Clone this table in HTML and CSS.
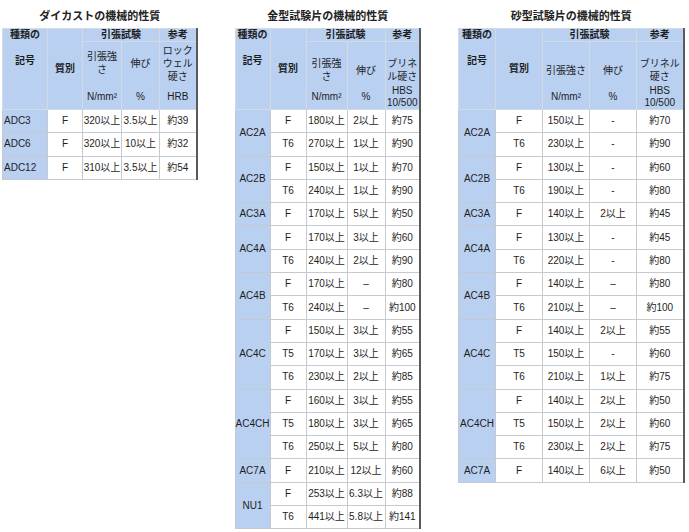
FILE: index.html
```html
<!DOCTYPE html>
<html lang="ja">
<head>
<meta charset="utf-8">
<title>機械的性質</title>
<link rel="stylesheet" href="styles.css">
</head>
<body>
<div class="page">

  <section class="block b1">
    <h2 class="ttl">ダイカストの機械的性質</h2>
    <table class="tb t1">
      <colgroup><col class="c1"><col class="c2"><col class="c3"><col class="c4"><col class="c5"></colgroup>
      <thead>
        <tr class="h1">
          <th rowspan="2" class="kind"><div class="k1">種類の</div><div class="k2">記号</div></th>
          <th rowspan="2" class="bold">質別</th>
          <th colspan="2" class="bold">引張試験</th>
          <th class="bold">参考</th>
        </tr>
        <tr class="h2">
          <th><div class="stack"><div class="top">引張強さ</div><div class="bot">N/mm²</div></div></th>
          <th><div class="stack"><div class="top">伸び</div><div class="bot">%</div></div></th>
          <th><div class="stack"><div class="top">ロックウェル硬さ</div><div class="bot">HRB</div></div></th>
        </tr>
      </thead>
      <tbody>
        <tr class="d"><td class="lab left">ADC3</td><td>F</td><td>320以上</td><td>3.5以上</td><td>約39</td></tr>
        <tr class="d"><td class="lab left">ADC6</td><td>F</td><td>320以上</td><td>10以上</td><td>約32</td></tr>
        <tr class="d"><td class="lab left">ADC12</td><td>F</td><td>310以上</td><td>3.5以上</td><td>約54</td></tr>
      </tbody>
    </table>
  </section>

  <section class="block b2">
    <h2 class="ttl">金型試験片の機械的性質</h2>
    <table class="tb t2">
      <colgroup><col class="c1"><col class="c2"><col class="c3"><col class="c4"><col class="c5"></colgroup>
      <thead>
        <tr class="h1">
          <th rowspan="2" class="kind"><div class="k1">種類の</div><div class="k2">記号</div></th>
          <th rowspan="2" class="bold">質別</th>
          <th colspan="2" class="bold">引張試験</th>
          <th class="bold">参考</th>
        </tr>
        <tr class="h2">
          <th><div class="stack low"><div class="top">引張強さ</div><div class="bot">N/mm²</div></div></th>
          <th><div class="stack low"><div class="top">伸び</div><div class="bot">%</div></div></th>
          <th><div class="stack low"><div class="top">ブリネル硬さ</div><div class="bot">HBS<br>10/500</div></div></th>
        </tr>
      </thead>
      <tbody>
        <tr class="d"><td rowspan="2" class="lab">AC2A</td><td>F</td><td>180以上</td><td>2以上</td><td>約75</td></tr>
        <tr class="d"><td>T6</td><td>270以上</td><td>1以上</td><td>約90</td></tr>
        <tr class="d"><td rowspan="2" class="lab">AC2B</td><td>F</td><td>150以上</td><td>1以上</td><td>約70</td></tr>
        <tr class="d"><td>T6</td><td>240以上</td><td>1以上</td><td>約90</td></tr>
        <tr class="d"><td class="lab">AC3A</td><td>F</td><td>170以上</td><td>5以上</td><td>約50</td></tr>
        <tr class="d"><td rowspan="2" class="lab">AC4A</td><td>F</td><td>170以上</td><td>3以上</td><td>約60</td></tr>
        <tr class="d"><td>T6</td><td>240以上</td><td>2以上</td><td>約90</td></tr>
        <tr class="d"><td rowspan="2" class="lab">AC4B</td><td>F</td><td>170以上</td><td>–</td><td>約80</td></tr>
        <tr class="d"><td>T6</td><td>240以上</td><td>–</td><td>約100</td></tr>
        <tr class="d"><td rowspan="3" class="lab">AC4C</td><td>F</td><td>150以上</td><td>3以上</td><td>約55</td></tr>
        <tr class="d"><td>T5</td><td>170以上</td><td>3以上</td><td>約65</td></tr>
        <tr class="d"><td>T6</td><td>230以上</td><td>2以上</td><td>約85</td></tr>
        <tr class="d"><td rowspan="3" class="lab">AC4CH</td><td>F</td><td>160以上</td><td>3以上</td><td>約55</td></tr>
        <tr class="d"><td>T5</td><td>180以上</td><td>3以上</td><td>約65</td></tr>
        <tr class="d"><td>T6</td><td>250以上</td><td>5以上</td><td>約80</td></tr>
        <tr class="d"><td class="lab">AC7A</td><td>F</td><td>210以上</td><td>12以上</td><td>約60</td></tr>
        <tr class="d"><td rowspan="2" class="lab">NU1</td><td>F</td><td>253以上</td><td>6.3以上</td><td>約88</td></tr>
        <tr class="d"><td>T6</td><td>441以上</td><td>5.8以上</td><td>約141</td></tr>
      </tbody>
    </table>
  </section>

  <section class="block b3">
    <h2 class="ttl">砂型試験片の機械的性質</h2>
    <table class="tb t3">
      <colgroup><col class="c1"><col class="c2"><col class="c3"><col class="c4"><col class="c5"></colgroup>
      <thead>
        <tr class="h1">
          <th rowspan="2" class="kind"><div class="k1">種類の</div><div class="k2">記号</div></th>
          <th rowspan="2" class="bold">質別</th>
          <th colspan="2" class="bold">引張試験</th>
          <th class="bold">参考</th>
        </tr>
        <tr class="h2">
          <th><div class="stack low"><div class="top">引張強さ</div><div class="bot">N/mm²</div></div></th>
          <th><div class="stack low"><div class="top">伸び</div><div class="bot">%</div></div></th>
          <th><div class="stack low"><div class="top">ブリネル硬さ</div><div class="bot">HBS<br>10/500</div></div></th>
        </tr>
      </thead>
      <tbody>
        <tr class="d"><td rowspan="2" class="lab">AC2A</td><td>F</td><td>150以上</td><td>-</td><td>約70</td></tr>
        <tr class="d"><td>T6</td><td>230以上</td><td>-</td><td>約90</td></tr>
        <tr class="d"><td rowspan="2" class="lab">AC2B</td><td>F</td><td>130以上</td><td>-</td><td>約60</td></tr>
        <tr class="d"><td>T6</td><td>190以上</td><td>-</td><td>約80</td></tr>
        <tr class="d"><td class="lab">AC3A</td><td>F</td><td>140以上</td><td>2以上</td><td>約45</td></tr>
        <tr class="d"><td rowspan="2" class="lab">AC4A</td><td>F</td><td>130以上</td><td>-</td><td>約45</td></tr>
        <tr class="d"><td>T6</td><td>220以上</td><td>-</td><td>約80</td></tr>
        <tr class="d"><td rowspan="2" class="lab">AC4B</td><td>F</td><td>140以上</td><td>–</td><td>約80</td></tr>
        <tr class="d"><td>T6</td><td>210以上</td><td>–</td><td>約100</td></tr>
        <tr class="d"><td rowspan="3" class="lab">AC4C</td><td>F</td><td>140以上</td><td>2以上</td><td>約55</td></tr>
        <tr class="d"><td>T5</td><td>150以上</td><td>-</td><td>約60</td></tr>
        <tr class="d"><td>T6</td><td>210以上</td><td>1以上</td><td>約75</td></tr>
        <tr class="d"><td rowspan="3" class="lab">AC4CH</td><td>F</td><td>140以上</td><td>2以上</td><td>約50</td></tr>
        <tr class="d"><td>T5</td><td>150以上</td><td>2以上</td><td>約60</td></tr>
        <tr class="d"><td>T6</td><td>230以上</td><td>2以上</td><td>約75</td></tr>
        <tr class="d"><td class="lab">AC7A</td><td>F</td><td>140以上</td><td>6以上</td><td>約50</td></tr>
      </tbody>
    </table>
  </section>

</div>
</body>
</html>
```

FILE: styles.css
```css
html, body {
  margin: 0;
  padding: 0;
  background: #ffffff;
}

body {
  font-family: "Liberation Sans", "Noto Sans CJK JP", sans-serif;
  font-size: 10px;
  color: #1e1e1e;
}

.page {
  display: flex;
  align-items: flex-start;
  gap: 37px;
  padding-left: 2px;
}

.block {
  display: flex;
  flex-direction: column;
}

.ttl {
  margin: 0 0 6px 0;
  padding-top: 9px;
  font-family: "Noto Sans CJK JP", sans-serif;
  font-size: 11px;
  line-height: 13px;
  font-weight: 700;
  text-align: center;
  color: #222;
}

.tb {
  border-collapse: collapse;
  table-layout: fixed;
  border-top: 1px solid #c3c7cc;
  border-left: 1px solid #c3c7cc;
  border-right: 2px solid #5a5a5a;
  border-bottom: 1px solid #9a9a9a;
}

.t1 { width: 194px; }
.t1 .c1 { width: 45px; }
.t1 .c2 { width: 35px; }
.t1 .c3 { width: 39px; }
.t1 .c4 { width: 38px; }
.t1 .c5 { width: 37px; }

.t2 { width: 185px; }
.t2 .c1 { width: 35px; }
.t2 .c2 { width: 36px; }
.t2 .c3 { width: 41px; }
.t2 .c4 { width: 38px; }
.t2 .c5 { width: 35px; }

.t3 { width: 225px; }
.t3 .c1 { width: 37px; }
.t3 .c2 { width: 47px; }
.t3 .c3 { width: 47px; }
.t3 .c4 { width: 47px; }
.t3 .c5 { width: 47px; }

th {
  background: #b9d0f1;
  border: 1px solid #d2dae6;
  padding: 0;
  font-weight: 400;
  text-align: center;
  vertical-align: middle;
  line-height: 12px;
}

th.bold,
.kind {
  font-weight: 700;
}

.h1 th {
  height: 12px;
}

.kind {
  vertical-align: top;
}

.k1 {
  line-height: 12px;
}

.k2 {
  margin-top: 13px;
  line-height: 13px;
}

.stack {
  display: flex;
  flex-direction: column;
  height: 67px;
}

.stack .top {
  flex: 1;
  display: flex;
  align-items: center;
  justify-content: center;
  line-height: 13px;
  padding: 0 1px;
}

.stack.low .top {
  padding-top: 14px;
}

.stack .bot {
  height: 25px;
  display: flex;
  align-items: center;
  justify-content: center;
  line-height: 12px;
}

.d {
  height: 23.3px;
}

td {
  border: 1px solid #c6c9ce;
  padding: 0;
  text-align: center;
  vertical-align: middle;
  white-space: nowrap;
  background: #ffffff;
  line-height: 12px;
}

td.lab {
  background: #b9d0f1;
}

td.left {
  text-align: left;
  padding-left: 1px;
}
```
